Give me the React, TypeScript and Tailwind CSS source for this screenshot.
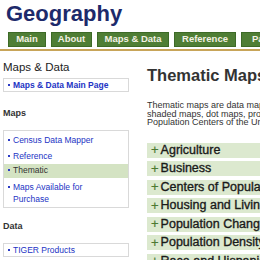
const tabs = [
  { label: "Main", width: "w-[38px]" },
  { label: "About", width: "w-[41px]" },
  { label: "Maps & Data", width: "w-[72px]" },
  { label: "Reference", width: "w-[62px]" },
  { label: "Partnerships", width: "w-[80px]" },
];

const mapLinks = [
  { label: "Census Data Mapper" },
  { label: "Reference" },
  { label: "Thematic", active: true },
  { label: "Maps Available for Purchase" },
];

const topics = [
  "Agriculture",
  "Business",
  "Centers of Population",
  "Housing and Living Arrangements",
  "Population Change",
  "Population Density",
  "Race and Hispanic Origin",
];

const Bullet = () => (
  <span className="mr-[3px] inline-block h-[2px] w-[2px] shrink-0 bg-[#2b3bc4]" />
);

export default function App() {
  return (
    <div className="h-[260px] w-[260px] overflow-hidden bg-white font-['Liberation_Sans',Arial,sans-serif]">
      {/* header */}
      <div className="pl-[6px] pt-[1px] text-[22px] font-bold leading-[25px] text-[#1d2a6b]">
        Geography
      </div>

      {/* tabs */}
      <div className="mt-[6px] flex gap-[5px] whitespace-nowrap border-b-2 border-[#c8a559] pl-[8px]">
        {tabs.map((t) => (
          <div
            key={t.label}
            className={`${t.width} mb-[2px] flex h-[15px] shrink-0 items-center justify-center border border-[#3d6a27] bg-[#4f7e35] text-[9.5px] font-bold text-[#f4f1e4]`}
          >
            {t.label}
          </div>
        ))}
      </div>

      <div className="flex pl-[3px] pt-[9px]">
        {/* sidebar */}
        <div className="w-[126px] shrink-0 text-[8.5px]">
          <div className="text-[11.5px] leading-[14px] text-[#222]">Maps &amp; Data</div>
          <div className="mt-[4px] flex h-[14px] items-center border border-[#d9d9d9] pl-[4px] font-bold text-[#2233c4]">
            <Bullet />
            Maps &amp; Data Main Page
          </div>

          <div className="mt-[15px] text-[9px] font-bold leading-[12px] text-[#333]">Maps</div>
          <div className="mt-[11px] border border-[#d9d9d9] pt-[1px]">
            {mapLinks.map((l) => (
              <div
                key={l.label}
                className={`flex items-start pl-[4px] leading-[12px] ${
                  l.active
                    ? "mb-[1px] h-[14px] items-center bg-[#d4e3c3] text-[#333]"
                    : "mb-[1px] py-[1.5px] text-[#2233c4]"
                }`}
              >
                <span className="flex h-[12px] items-center">
                  <Bullet />
                </span>
                <span className={l.label.length > 20 ? "w-[90px]" : ""}>{l.label}</span>
              </div>
            ))}
          </div>

          <div className="mt-[12px] text-[9px] font-bold leading-[12px] text-[#333]">Data</div>
          <div className="mt-[11px] flex h-[14px] items-center border border-[#d9d9d9] pl-[4px] text-[#2233c4]">
            <Bullet />
            TIGER Products
          </div>
        </div>

        {/* main */}
        <div className="ml-[18px] min-w-0 flex-1 whitespace-nowrap">
          <div className="mt-[7px] text-[16.5px] font-bold leading-[17px] text-[#333]">
            Thematic Maps
          </div>
          <div className="mt-[17px] text-[9px] leading-[8.5px] text-[#333]">
            <div>Thematic maps are data maps that show</div>
            <div>shaded maps, dot maps, proportional symbols</div>
            <div>Population Centers of the United States</div>
          </div>
          <div className="mt-[16px] flex flex-col gap-[3.5px]">
            {topics.map((t) => (
              <div
                key={t}
                className="flex h-[15px] items-center bg-[#dce9cf] pl-[4px] text-[12.5px] text-[#1a1a1a] [-webkit-text-stroke:0.35px_#1a1a1a]"
              >
                <span className="mr-[2px] text-[13px] text-[#4d7a32] [-webkit-text-stroke:0.2px_#4d7a32]">+</span>
                {t}
              </div>
            ))}
          </div>
        </div>
      </div>
    </div>
  );
}
